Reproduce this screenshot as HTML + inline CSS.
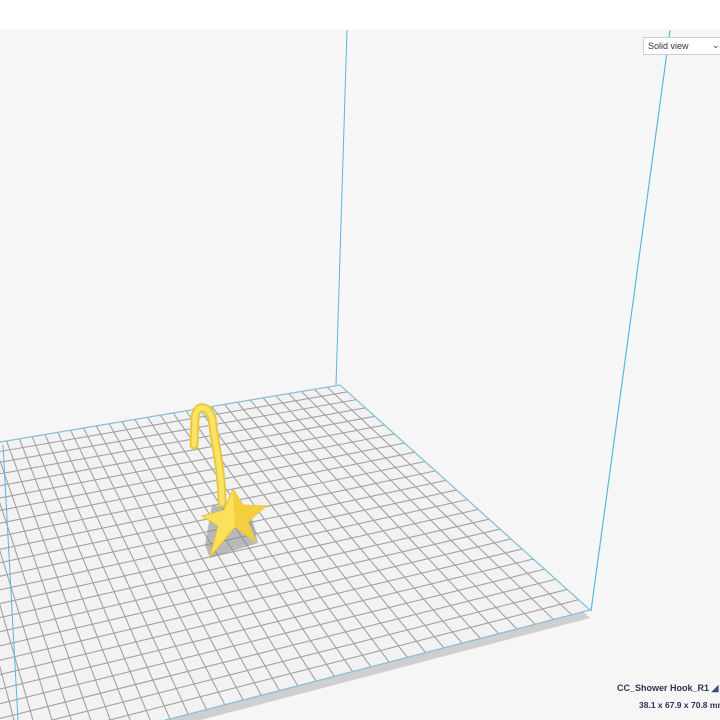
<!DOCTYPE html>
<html><head><meta charset="utf-8"><style>
html,body{margin:0;padding:0;width:720px;height:720px;overflow:hidden;background:#f6f6f6;font-family:"Liberation Sans",sans-serif}
#top{position:absolute;left:0;top:0;width:720px;height:30px;background:#fff}
#dd{position:absolute;left:643px;top:37px;width:77px;height:18px;background:#fff;border:1px solid #cfcfcf;border-right:none;box-sizing:border-box;font-size:9px;color:#333;line-height:16px;padding-left:4px;overflow:hidden}
#dd span{position:absolute;left:68px;top:-1px;font-size:9px}
.t{position:absolute;font-size:9px;font-weight:bold;color:#2c3550;white-space:nowrap}
</style></head><body>
<svg id="s" width="720" height="720" style="position:absolute;left:0;top:0;overflow:hidden">
<g id="g"></g>
<line x1="347" y1="30" x2="336" y2="385" stroke="#5ab6de" stroke-width="1"/>
<line x1="670" y1="30" x2="591" y2="611" stroke="#5ab6de" stroke-width="1.2"/>
<line x1="3" y1="445" x2="18" y2="720" stroke="#5ab6de" stroke-width="1"/>
<polygon points="212,505 205,545 210,558 258,543 250,510" fill="#8a8a8a" opacity="0.55"/>
<path d="M222,503 C222,470 214,440 213,425 C212,405 196,402 195,418 L194,445" fill="none" stroke="#e8c93c" stroke-width="9" stroke-linecap="round"/>
<path d="M222,503 C222,470 214,440 213,425 C212,405 196,402 195,418 L194,445" fill="none" stroke="#fbe36a" stroke-width="5" stroke-linecap="round"/>
<polygon points="233,489 243,505 266,506 248,522 256,542 235,527 210,557 218,526 202,516 224,510" fill="#fbe05a" stroke="#e5c53a" stroke-width="1"/>
<polygon points="233,489 243,505 266,506 248,522 256,542 235,527" fill="#f3cf3e"/>
</svg>
<div id="top"></div>
<div id="dd">Solid view<span>&#8964;</span></div>
<div class="t" style="left:617px;top:683px">CC_Shower Hook_R1 <span style="color:#3a4a7a">&#9698;</span></div>
<div class="t" style="left:639px;top:700px;font-size:8.5px">38.1 x 67.9 x 70.8 mm</div>
<script>
var BR=[340,385],FR=[590,610],FL=[-250,828],BL=[-250,484];
function L(a,b,t){return [a[0]+(b[0]-a[0])*t,a[1]+(b[1]-a[1])*t];}
var g=document.getElementById('g'),ns='http://www.w3.org/2000/svg';
function el(n,at){var e=document.createElementNS(ns,n);for(var k in at)e.setAttribute(k,at[k]);g.appendChild(e);return e;}
el('polygon',{points:[BL,BR,[BR[0],BR[1]+3],[FR[0],FR[1]+8],[FL[0],FL[1]+10],FL].map(p=>p.join(',')).join(' '),fill:'#cfcfcf'});
el('polygon',{points:[BL,BR,FR,FL].map(p=>p.join(',')).join(' '),fill:'#f2f2f2'});
var N=46,M=24;
for(var i=0;i<=N;i++){var t=i/N;var a=L(BL,BR,t),b=L(FL,FR,t);el('line',{x1:a[0],y1:a[1],x2:b[0],y2:b[1],stroke:'#a2a2a2','stroke-width':1.1});}
for(var j=0;j<=M;j++){var t=Math.pow(j/M,1.1);var a=L(BL,FL,t),b=L(BR,FR,t);el('line',{x1:a[0],y1:a[1],x2:b[0],y2:b[1],stroke:'#a2a2a2','stroke-width':1.1});}
el('polyline',{points:[BL,BR,FR,FL].map(p=>p.join(',')).join(' '),fill:'none',stroke:'#7fc3e3','stroke-width':1});
</script>
</body></html>
